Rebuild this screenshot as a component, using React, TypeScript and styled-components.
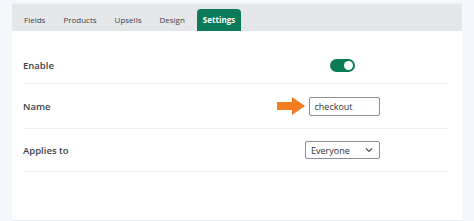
import React from 'react';
import styled, { createGlobalStyle } from 'styled-components';

const GlobalStyle = createGlobalStyle`
  body {
    margin: 0;
    background: #f4f8fc;
    font-family: 'Open Sans', 'Noto Sans', sans-serif;
  }
`;

const tabs = ['Fields', 'Products', 'Upsells', 'Design', 'Settings'];

const App = () => {
  return (
    <Page>
      <GlobalStyle />
      <Panel>
        <TabBar>
          {tabs.map((tab) => (
            <Tab key={tab} $active={tab === 'Settings'}>
              {tab}
            </Tab>
          ))}
        </TabBar>
        <Content>
          <Row $height={35}>
            <Label>Enable</Label>
            <Control>
              <Toggle>
                <Knob />
              </Toggle>
            </Control>
          </Row>
          <Row $height={44}>
            <Label>Name</Label>
            <Control>
              <Arrow width="28" height="18" viewBox="0 0 28 18">
                <path d="M0 5 H15 V0 L28 9 L15 18 V13 H0 Z" fill="#f47b20" />
              </Arrow>
              <TextInput defaultValue="checkout" />
            </Control>
          </Row>
          <Row $height={42}>
            <Label>Applies to</Label>
            <Control>
              <Select>
                <span>Everyone</span>
                <svg width="8" height="6" viewBox="0 0 8 6">
                  <path d="M1 1.5 L4 4.5 L7 1.5" fill="none" stroke="#50575e" strokeWidth="1.2" />
                </svg>
              </Select>
            </Control>
          </Row>
        </Content>
      </Panel>
    </Page>
  );
};

export default App;

const Page = styled.div`
  padding: 3px 12px 0 12px;
  width: 474px;
  height: 221px;
  box-sizing: border-box;
`;

const Panel = styled.div`
  width: 450px;
  background: #ffffff;
  border-bottom: 1px solid #e8edf3;
`;

const TabBar = styled.div`
  display: flex;
  align-items: flex-end;
  gap: 6px;
  height: 28px;
  padding-left: 6px;
  background: #e6e7e9;
  border-top: 1px solid #eef0f2;
  box-sizing: border-box;
`;

const Tab = styled.div<{ $active?: boolean }>`
  height: 22px;
  line-height: 22px;
  padding: 0 6px;
  font-size: 8px;
  font-weight: ${(p) => (p.$active ? 700 : 400)};
  color: ${(p) => (p.$active ? '#ffffff' : '#3c434a')};
  background: ${(p) => (p.$active ? '#0b7a5a' : 'transparent')};
  border-radius: 4px 4px 0 0;
`;

const Content = styled.div`
  padding: 17px 14px 48px 11px;
`;

const Row = styled.div<{ $height: number }>`
  display: flex;
  align-items: center;
  height: ${(p) => p.$height}px;
  border-bottom: 1px solid #eceef0;
`;

const Label = styled.div`
  flex: 1;
  font-size: 9.5px;
  font-weight: 600;
  color: #3c434a;
`;

const Control = styled.div`
  position: relative;
  width: 75px;
  margin-right: 68px;
  display: flex;
  justify-content: center;
`;

const Toggle = styled.div`
  width: 25px;
  height: 13px;
  border-radius: 7px;
  background: #0b7a56;
  position: relative;
`;

const Knob = styled.div`
  position: absolute;
  right: 2px;
  top: 2px;
  width: 9px;
  height: 9px;
  border-radius: 50%;
  background: #ffffff;
`;

const Arrow = styled.svg`
  position: absolute;
  left: -28px;
  top: 0px;
`;

const TextInput = styled.input`
  width: 71px;
  height: 19px;
  margin-left: 3px;
  box-sizing: border-box;
  border: 1px solid #8c8f94;
  border-radius: 2px;
  padding: 0 5px;
  font-family: 'Open Sans', 'Noto Sans', sans-serif;
  font-size: 9px;
  color: #2c3338;
  outline: none;
`;

const Select = styled.div`
  width: 75px;
  height: 18px;
  box-sizing: border-box;
  border: 1px solid #8c8f94;
  border-radius: 2px;
  padding: 0 6px 0 5px;
  display: flex;
  align-items: center;
  justify-content: space-between;
  font-size: 9px;
  color: #2c3338;
`;
